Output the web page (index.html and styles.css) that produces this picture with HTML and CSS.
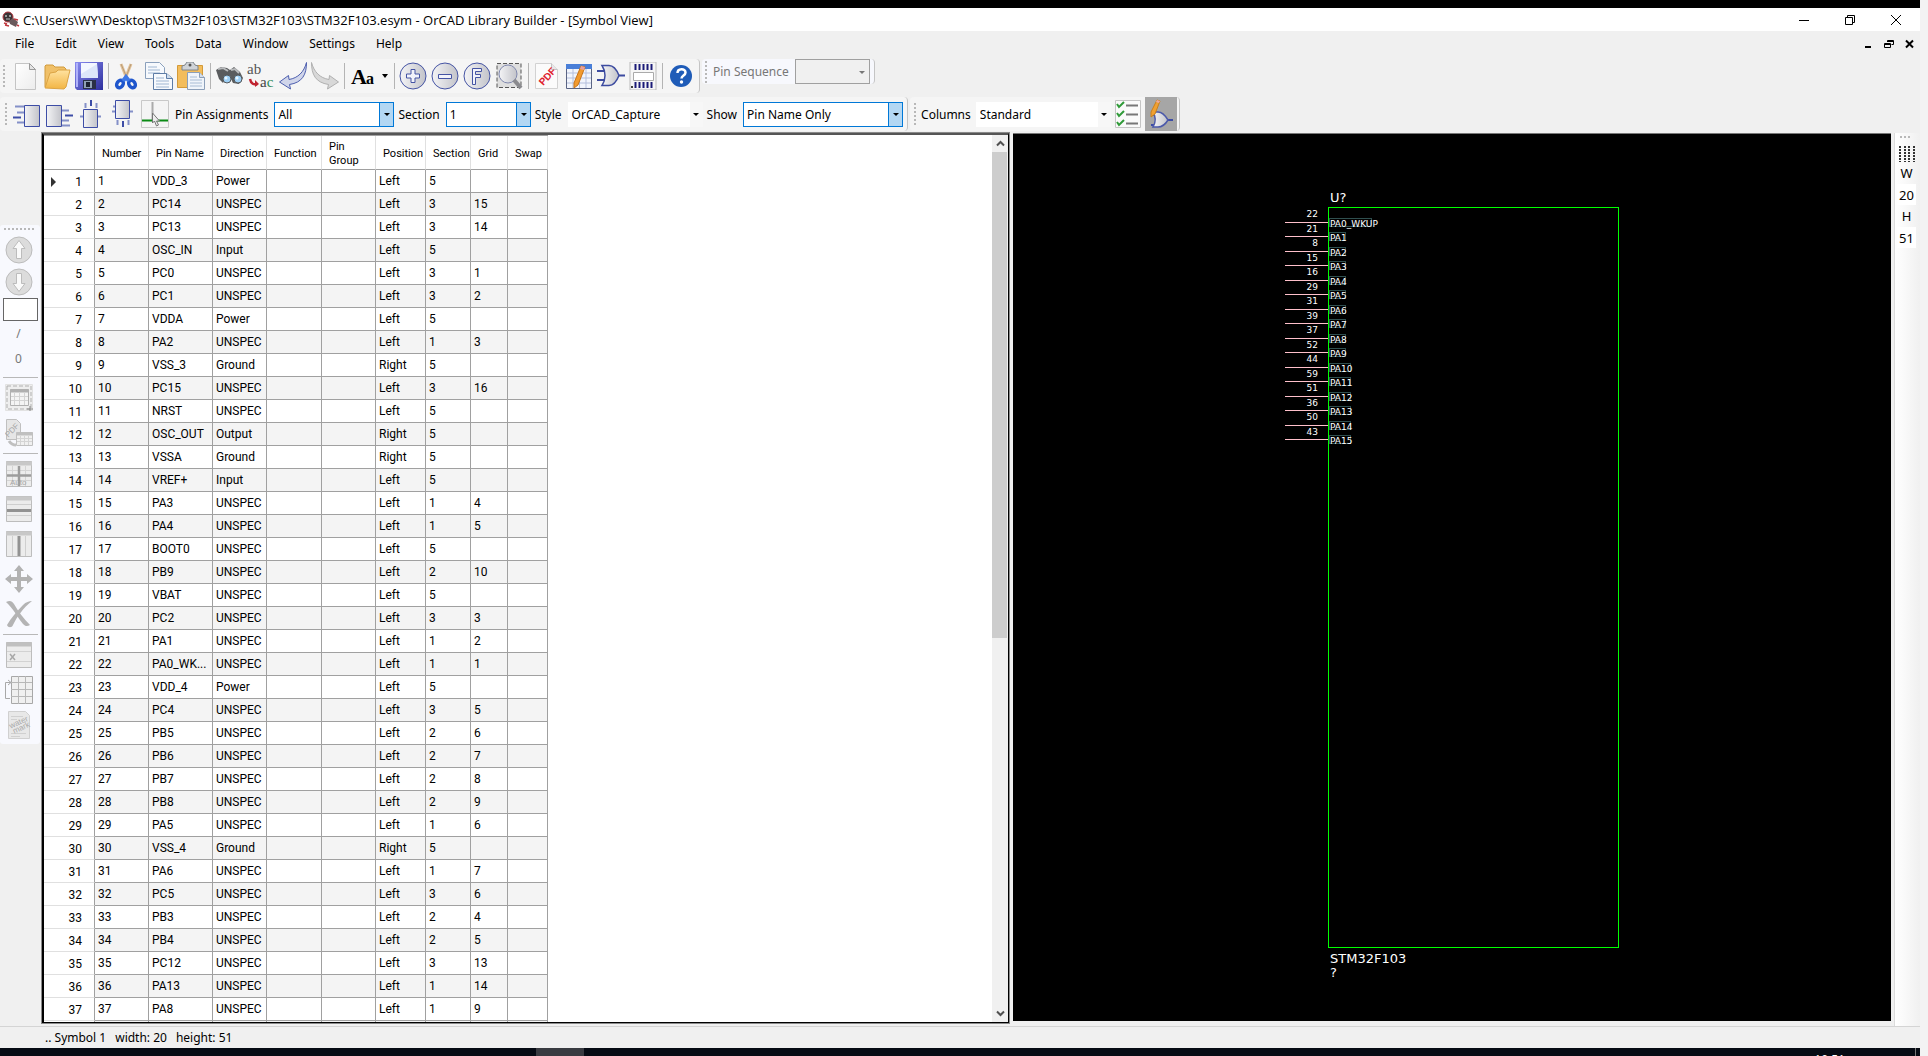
FILE: index.html
```html
<!DOCTYPE html>
<html lang="en">
<head>
    <meta charset="UTF-8">
    <meta name="viewport" content="width=device-width, initial-scale=1.0">
    <title>OrCAD Library Builder</title>
    <link rel="stylesheet" href="styles.css">
</head>
<body>
    <svg width="0" height="0" class="defs">
        <defs>
            <linearGradient id="gBtn" x1="0" x2="1"><stop offset="0" stop-color="#f4f4f6"/><stop offset="1" stop-color="#c2c3c9"/></linearGradient>
            <linearGradient id="gPage" x1="0" y1="0" x2="1" y2="1"><stop offset="0" stop-color="#ffffff"/><stop offset="1" stop-color="#ececec"/></linearGradient>
            <linearGradient id="gFolder" x1="0" y1="0" x2="0" y2="1"><stop offset="0" stop-color="#ffe2a0"/><stop offset="1" stop-color="#f2b544"/></linearGradient>
            <linearGradient id="gSave" x1="0" y1="0" x2="1" y2="1"><stop offset="0" stop-color="#8a8cf0"/><stop offset="1" stop-color="#2c2e9c"/></linearGradient>
        </defs>
    </svg>

    <div class="window">
        <header class="titlebar">
            <svg class="app-icon" width="18" height="18" viewBox="0 0 18 18"><circle cx="6" cy="6" r="5" fill="#3a3436" stroke="#b0343c"/><circle cx="4" cy="5" r="1" fill="#bbb"/><circle cx="8" cy="5" r="1" fill="#bbb"/><path d="M4 8h4" stroke="#bbb"/><path d="M7 10l4-3 5 4-2 5-6-3z" fill="#6a5a5c"/><path d="M2 12l3 1M3 14l4 1M12 8l4 1M15 14l2 1" stroke="#c23a40" stroke-width="1.5"/></svg>
            <span class="title">C:\Users\WY\Desktop\STM32F103\STM32F103\STM32F103.esym - OrCAD Library Builder - [Symbol View]</span>
            <div class="window-buttons">
                <button aria-label="Minimize"><svg width="12" height="12"><path d="M1 6.500h10" stroke="#000"/></svg></button>
                <button aria-label="Restore"><svg width="12" height="12" fill="none" stroke="#000"><path d="M1.500 3.500h7v7h-7zM3.500 3v-1.500h7v7h-2"/></svg></button>
                <button aria-label="Close"><svg width="12" height="12"><path d="M1 1l10 10M11 1l-10 10" stroke="#000"/></svg></button>
            </div>
        </header>

        <nav class="menubar">
            <button>File</button>
            <button>Edit</button>
            <button>View</button>
            <button>Tools</button>
            <button>Data</button>
            <button>Window</button>
            <button>Settings</button>
            <button>Help</button>
            <div class="child-buttons">
                <button aria-label="Minimize view"><svg width="10" height="10"><path d="M2 8h6" stroke="#000" stroke-width="2"/></svg></button>
                <button aria-label="Restore view"><svg width="10" height="10" fill="none" stroke="#000"><path d="M.500 4.500h6v4h-6zM.500 5.500h6M3.500 3v-1.500h6v4h-2M3 2.500h6"/></svg></button>
                <button aria-label="Close view"><svg width="10" height="10"><path d="M1 1.500l7 7M8 1.500l-7 7" stroke="#000" stroke-width="2"/></svg></button>
            </div>
        </nav>

        <div class="toolbar-row">
            <div class="toolbar">
                <span class="grip"></span>
                <button class="tool" aria-label="New"><svg width="28" height="28"><path d="M4.500 1.500h14l6 6v20h-20z" fill="url(#gPage)" stroke="#c4c4c4"/><path d="M18.500 1.500v6h6z" fill="#e4e4e4" stroke="#9a9a9a"/></svg></button>
                <button class="tool" aria-label="Open"><svg width="28" height="28"><path d="M2 25V4l1-1h7l2 2h9l2 2v5" fill="#f0c068" stroke="#d09a3c"/><path d="M2 26l5-15 6-1 2-2h12l-4 17-2 2z" fill="url(#gFolder)" stroke="#dca444"/></svg></button>
                <button class="tool" aria-label="Save"><svg width="28" height="28"><path d="M0 0h28v28H2l-2-2z" fill="url(#gSave)"/><path d="M6 1h16l1 15H6z" fill="#f4f7ff"/><path d="M6 12l16-10 1 14H6z" fill="#dde6fa"/><path d="M8 18h13v9H8z" fill="#2a3046"/><path d="M9 19h8v7H9z" fill="#8fa0b4"/><path d="M11 20h4v5h-4z" fill="#1c2230"/><path d="M1 1h2v24H1z" fill="#b0b2fa"/></svg></button>
                <span class="sep"></span>
                <button class="tool" aria-label="Cut"><svg width="28" height="28" fill="none"><path d="M8 2l6 15M18 2l-6 15" stroke="#e2c298" stroke-width="3"/><path d="M8 2l6 14M18 2l-5 13" stroke="#b89c78"/><ellipse cx="7" cy="22" rx="3" ry="4" stroke="#1f56cc" stroke-width="3.500" transform="rotate(35 7 22)"/><ellipse cx="19" cy="22" rx="3" ry="4" stroke="#1f56cc" stroke-width="3.500" transform="rotate(-35 19 22)"/><path d="M10 19l3-4 3 4" stroke="#3e78e6" stroke-width="4"/></svg></button>
                <button class="tool" aria-label="Copy"><svg width="28" height="28"><path d="M.500.500h14l5 5v11h-19z" fill="#f6f9fd" stroke="#8aa0bc"/><path d="M3 5h9M3 8h12M3 11h12" stroke="#9fb6d2"/><path d="M8.500 11.500h13l6 5v11h-19z" fill="#f6f9fd" stroke="#5d7ca6"/><path d="M21.500 11.500v5h6" fill="#cfdcec" stroke="#5d7ca6"/><path d="M11 16h8M11 19h13M11 22h13M11 25h13" stroke="#9fb6d2"/></svg></button>
                <button class="tool" aria-label="Paste"><svg width="28" height="28"><path d="M.500 3.500h25v22h-25z" fill="#f3bd5c" stroke="#d49a38"/><path d="M5 4l3-1 2-3h6l2 3 3 1v4H5z" fill="#cfd3d8" stroke="#7e858c"/><circle cx="13" cy="3" r="1.500" fill="#555"/><path d="M10.500 10.500h12l5 5v12h-17z" fill="#eff4fa" stroke="#8b9fb9"/><path d="M22.500 10.500v5h5" fill="#d4dfec" stroke="#8b9fb9"/><path d="M13 15h7M13 18h12M13 21h12M13 24h12" stroke="#a8bcd4"/></svg></button>
                <span class="sep"></span>
                <button class="tool" aria-label="Find"><svg width="28" height="28"><path d="M1 8l5-3 6 1 3 2 4-3 6 5 3 6-4 6-6-1-3-6-3-1-4 7-4-4z" fill="#5a5c5e"/><path d="M3 7l5-1 5 3M16 8l4-1 4 4" stroke="#b8babc" stroke-width="2" fill="none"/><circle cx="12" cy="17" r="4" fill="#9ed0f6" stroke="#55585a"/><circle cx="23" cy="17" r="4" fill="#9ed0f6" stroke="#55585a"/><circle cx="11" cy="16" r="1.500" fill="#e8f6ff"/><circle cx="22" cy="16" r="1.500" fill="#e8f6ff"/></svg></button>
                <button class="tool" aria-label="Replace"><svg width="28" height="28" class="serif-icon"><text x="0" y="12" fill="#555">ab</text><text x="13" y="25"><tspan fill="#444">a</tspan><tspan fill="#2c8a5a">c</tspan></text><path d="M3 17c1 5 4 6 7 5" stroke="#c02430" stroke-width="2.500" fill="none"/><path d="M8 18l4 4-4 3z" fill="#c02430"/></svg></button>
                <button class="tool" aria-label="Undo"><svg width="28" height="28"><path d="M27.500.500c0 12-4 20-17 22l1 4.500L.500 20l9-6.500.500 4C19 16 25 10 27.500.500z" fill="#d0d5ea" stroke="#4c5eae"/></svg></button>
                <button class="tool" aria-label="Redo"><svg width="28" height="28"><path d="M.500.500c0 12 4 20 17 22l-1 4.500L27.500 20l-9-6.500-.500 4C9 16 3 10 .500.500z" fill="#d8d8d8" stroke="#b0b0b0"/></svg></button>
                <span class="sep"></span>
                <button class="tool font-tool" aria-label="Font"><svg width="40" height="28" class="font-icon"><text x="2" y="22" font-size="22">A</text><text x="17" y="22" font-size="16">a</text><path d="M33 12h6l-3 4z"/></svg></button>
                <span class="sep"></span>
                <button class="tool" aria-label="Zoom in"><svg width="28" height="28" stroke="#4554a4"><circle cx="14" cy="14" r="13" fill="url(#gBtn)"/><path d="M12 7.500h4v4.500h4.500v4H16v4.500h-4V16H7.500v-4H12z" fill="#f2f3fa"/></svg></button>
                <button class="tool" aria-label="Zoom out"><svg width="28" height="28" stroke="#4554a4"><circle cx="14" cy="14" r="13" fill="url(#gBtn)"/><path d="M7.500 12.500h13v4h-13z" fill="#f2f3fa"/></svg></button>
                <button class="tool" aria-label="Fit"><svg width="28" height="28" stroke="#4554a4"><circle cx="14" cy="14" r="13" fill="url(#gBtn)"/><path d="M9.500 6.500h9v3h-6v3h5v3h-5v7h-3z" fill="#f2f3fa"/></svg></button>
                <button class="tool" aria-label="Zoom to selection"><svg width="28" height="28"><path d="M2 1.500h24v24H2z" fill="#dedede" stroke="#555" stroke-dasharray="4 2"/><circle cx="13" cy="12" r="9" fill="url(#gBtn)" stroke="#8088ae"/><path d="M19 18l7 8" stroke="#8a8a8e" stroke-width="4"/></svg></button>
                <span class="sep"></span>
                <button class="tool" aria-label="PDF"><svg width="28" height="28"><path d="M2.500 1.500h16l6 6v19h-22z" fill="#fbfbfb" stroke="#d2d2d2"/><path d="M18.500 1.500v6h6" fill="#e8e8e8" stroke="#c4c4c4"/><text x="-10" y="4" transform="translate(14 14) rotate(-48)" class="pdf-text">PDF</text></svg></button>
                <button class="tool" aria-label="Edit table"><svg width="28" height="28"><path d="M1.500 2.500h25v24h-25z" fill="#f2f5fc" stroke="#5a6484"/><path d="M1 2h26v5H1z" fill="#4a7fd8"/><path d="M8 7v19M14.500 7v19M21 7v19M2 11h24M2 16h24M2 21h24" stroke="#b4bfdc"/><path d="M16 4l4 1-7 18-4 3 0-5z" fill="#f29a2e" stroke="#c87418"/><path d="M16 4l4 1-1 3-4-1z" fill="#e8a0a0"/></svg></button>
                <button class="tool" aria-label="Symbol"><svg width="28" height="28" fill="none" stroke="#3c4ba0" stroke-width="1.500"><path d="M0 9h8M0 18h8M22 13.500h6" stroke-width="2"/><path d="M5 3.500h7c5 0 8 5 10 10-2 5-5 10-10 10H5c4-6 4-14 0-20z" fill="url(#gBtn)"/></svg></button>
                <button class="tool" aria-label="Footprint"><svg width="28" height="28"><path d="M1 0h26v28H1z" fill="#f6f6f6" stroke="#bbb"/><path d="M6.500 2v6M10.500 2v6M14.500 2v6M18.500 2v6M22.500 2v6M6.500 20v6M10.500 20v6M14.500 20v6M18.500 20v6M22.500 20v6" stroke="#1c1c78" stroke-width="2"/><path d="M4.500 10.500h20v8h-20z" fill="#fff" stroke="#aaa"/><circle cx="3" cy="25" r="1"/></svg></button>
                <span class="sep"></span>
                <button class="tool" aria-label="Help"><svg width="28" height="28"><circle cx="14" cy="14" r="11" fill="#1f5cb8"/><path d="M10.500 11c0-5 8-5 8-.500 0 3-4 3-4 6" fill="none" stroke="#fff" stroke-width="2.500"/><circle cx="14.500" cy="20" r="1.700" fill="#fff"/></svg></button>
            </div>
            <div class="toolbar sequence disabled">
                <span class="grip"></span>
                <label for="sequence">Pin Sequence</label>
                <span class="combo w-sequence off"><select id="sequence" disabled><option></option></select></span>
            </div>
        </div>

        <div class="toolbar-row">
            <div class="toolbar pins">
                <span class="grip"></span>
                <button class="tool" aria-label="Pins left"><svg width="28" height="28" stroke="#3d4da6"><path d="M11.500 5.500h15v21h-15z" fill="url(#gBtn)"/><path d="M2 6.500h9M4 12.500h7M4 22.500h7" stroke="#8490c8" stroke-width="2"/><path d="M0 17.500h8" stroke-width="2"/></svg></button>
                <button class="tool" aria-label="Pins right"><svg width="28" height="28" stroke="#3d4da6"><path d="M1.500 5.500h15v21h-15z" fill="url(#gBtn)"/><path d="M17 10.500h7M17 20.500h7M17 25.500h8" stroke="#8490c8" stroke-width="2"/><path d="M20 15.500h8" stroke-width="2"/></svg></button>
                <button class="tool" aria-label="Pins top"><svg width="28" height="28" stroke="#3d4da6"><path d="M6.500 9.500h14v18h-14z" fill="url(#gBtn)"/><path d="M8.500 3v5M19.500 3v5M3 16.500h3M21 16.500h3" stroke="#8490c8" stroke-width="2"/><path d="M14 0v6" stroke-width="2"/></svg></button>
                <button class="tool" aria-label="Pins bottom"><svg width="28" height="28" stroke="#3d4da6"><path d="M6.500.500h14v18h-14z" fill="url(#gBtn)"/><path d="M8.500 20v5M19.500 20v5M3 11.500h3M21 11.500h3M4 6.500h2" stroke="#8490c8" stroke-width="2"/><path d="M14 21v6" stroke-width="2"/></svg></button>
                <button class="tool" aria-label="Snap"><svg width="28" height="28"><path d="M.500.500h27v27H.500z" fill="#f4f4f4" stroke="#c8c8c8"/><path d="M11.500 2v18" stroke="#aaa" stroke-width="2"/><path d="M1 20.500h26" stroke="#0a8a14" stroke-width="2"/><path d="M11.500 13v10l2-2 2 5 2-1-2-4h3z" fill="#eee" stroke="#777"/></svg></button>
                <label for="assign">Pin Assignments</label>
                <span class="combo w-assign boxed"><select id="assign"><option>All</option></select></span>
                <label for="section">Section</label>
                <span class="combo w-section boxed"><select id="section"><option>1</option></select></span>
                <label for="style">Style</label>
                <span class="combo w-style"><select id="style"><option>OrCAD_Capture</option></select></span>
                <label for="show">Show</label>
                <span class="combo w-show boxed"><select id="show"><option>Pin Name Only</option></select></span>
            </div>
            <div class="toolbar columns">
                <span class="grip"></span>
                <label for="columns">Columns</label>
                <span class="combo w-style"><select id="columns"><option>Standard</option></select></span>
                <button class="tool" aria-label="Choose columns"><svg width="28" height="28"><path d="M1.500.500h25v27h-25z" fill="#fafafa" stroke="#c4c4c4"/><path d="M3 4l2 3 5-5M3 13l2 3 5-5M3 22l2 3 5-5" fill="none" stroke="#2f9a38" stroke-width="2"/><path d="M12 5.500h12M12 14.500h12M12 23.500h12" stroke="#777" stroke-width="2"/></svg></button>
                <button class="tool pressed" aria-label="Edit symbol"><svg width="32" height="34"><path d="M6 18h5M6 28h5M22 23h6" stroke="#3d4da6" stroke-width="2"/><path d="M8 15h5c4 0 7 3 10 8-3 5-6 7-10 7H8c3-5 3-10 0-15z" fill="url(#gBtn)" stroke="#4b59aa" stroke-width="1.500"/><path d="M12 3l3 1-5 13-4 3 0-5z" fill="#f0a030" stroke="#c8801c"/><path d="M12 3l3 1-1 2-3-1z" fill="#e8a8a0"/></svg></button>
            </div>
        </div>

        <main class="workspace">
            <aside class="left-dock">
                <div class="side-toolbar">
                    <span class="grip-h"></span>
                    <div class="side-nav">
                        <button class="tool" aria-label="Previous"><svg width="28" height="28" stroke="#bcbcbc"><circle cx="14" cy="14" r="13" fill="#dcdcdc"/><path d="M14 4.500l6 8h-3.500v10h-5v-10H8z" fill="#fafafa"/></svg></button>
                        <button class="tool" aria-label="Next"><svg width="28" height="28" stroke="#bcbcbc"><circle cx="14" cy="14" r="13" fill="#dcdcdc"/><path d="M14 23.500l6-8h-3.500v-10h-5v10H8z" fill="#fafafa"/></svg></button>
                    </div>
                    <input class="page-input" type="text" aria-label="Page">
                    <span class="page-text">/</span>
                    <span class="page-text">0</span>
                    <span class="sep-h"></span>
                    <div class="side-group">
                        <button class="tool" aria-label="Select table"><svg width="28" height="28" fill="none" stroke="#b0b0b0"><path d="M.500.500h27v26H.500z" stroke="#e2e2e2" fill="#eee"/><path d="M2 2h24v23H2z" stroke-dasharray="4 2"/><path d="M5.500 5.500h18v16h-18z" fill="#f4f4f4"/><path d="M5 7h19" stroke-width="3"/><path d="M9.500 8v13M14.500 8v13M19.500 8v13M6 12.500h17M6 16.500h17" stroke="#d4d4d4"/><path d="M22 25h6M25 22v5" stroke="#888"/></svg></button>
                        <button class="tool" aria-label="PDF to table"><svg width="28" height="28" fill="none" stroke="#c0c0c0"><path d="M1.500.500h10l4 4v16H1.500z" fill="#e6e6e6"/><text x="0" y="15" transform="rotate(-45 6 13)" class="tiny-text">PDF</text><path d="M4 22c2 3 4 4 7 4" stroke-width="3"/><path d="M11.500 13.500h16v13h-16z" fill="#f0f0f0"/><path d="M11 15h17" stroke-width="3"/><path d="M15.500 17v9M19.500 17v9M23.500 17v9M12 19.500h15M12 22.500h15" stroke="#d4d4d4"/></svg></button>
                    </div>
                    <span class="sep-h"></span>
                    <div class="side-group">
                        <button class="tool" aria-label="Auto grid"><svg width="28" height="28" fill="none" stroke="#bdbdbd"><path d="M1.500 1.500h25v25h-25z" fill="#ececec"/><path d="M1 3.500h26" stroke="#c8c8c8" stroke-width="4"/><path d="M2 10.500h24M2 20.500h24M7.500 6v20M20.500 6v20" stroke="#d4d4d4"/><path d="M2 15.500h24M14 6v20" stroke="#9c9c9c" stroke-width="2.500"/><text x="5" y="25" class="tiny-text">Auto</text></svg></button>
                        <button class="tool" aria-label="Row line"><svg width="28" height="28" fill="none" stroke="#bdbdbd"><path d="M1.500 1.500h25v25h-25z" fill="#ececec"/><path d="M1 3.500h26" stroke="#c8c8c8" stroke-width="4"/><path d="M2 9.500h24M2 20.500h24" stroke="#cfcfcf"/><path d="M2 15.500h24" stroke="#929292" stroke-width="3"/></svg></button>
                        <button class="tool" aria-label="Column line"><svg width="28" height="28" fill="none" stroke="#bdbdbd"><path d="M1.500 1.500h25v25h-25z" fill="#ececec"/><path d="M1 3.500h26" stroke="#c8c8c8" stroke-width="4"/><path d="M7.500 6v20M20.500 6v20" stroke="#cfcfcf"/><path d="M14 6v20" stroke="#929292" stroke-width="3"/></svg></button>
                        <button class="tool" aria-label="Move"><svg width="28" height="28"><path d="M14 0l5 6h-3v6h6V9l6 5-6 5v-3h-6v6h3l-5 6-5-6h3v-6H6v3l-6-5 6-5v3h6V6H9z" fill="#b2b2b2"/></svg></button>
                        <button class="tool" aria-label="Delete"><svg width="28" height="28" fill="#b4b4b4"><path d="M1 2c4-2 6-1 8 2 4 7 9 14 16 21-3 2-5 1-7-1C13 18 8 8 1 2z"/><path d="M27 1c-3 0-6 1-9 4C12 11 6 18 2 25c1 3 5 3 6 0C12 17 18 8 27 1z"/></svg></button>
                    </div>
                    <span class="sep-h"></span>
                    <div class="side-group">
                        <button class="tool" aria-label="Remove row"><svg width="28" height="28" fill="none" stroke="#bdbdbd"><path d="M1.500 1.500h25v25h-25z" fill="#ececec"/><path d="M1 3.500h26" stroke="#c0c0c0" stroke-width="4"/><path d="M2 10.500h24M2 20.500h24" stroke="#d2d2d2"/><path d="M5 13l5 6M10 13l-5 6" stroke="#a8a8a8" stroke-width="1.500"/></svg></button>
                        <button class="tool" aria-label="Swap columns"><svg width="28" height="28" fill="none" stroke="#a8a8a8"><path d="M6.500.500h21v27h-21z" fill="#f0f0f0"/><path d="M6 6.500h21M6 13.500h21M6 20.500h21M13.500 0v28M20.500 0v28" stroke="#b8b8b8"/><path d="M6 6.500H.500v16H5M3 4l3 2.500L3 9"/></svg></button>
                        <button class="tool" aria-label="Watermark"><svg width="28" height="28" fill="none" stroke="#d0d0d0"><path d="M3.500.500h17l4 4v23h-21z" fill="#e8e8e8"/><path d="M6 5.500h12M6 8.500h6M6 22.500h15M6 25.500h9"/><text x="5" y="14" transform="rotate(-25 14 14)" class="tiny-text">water</text><text x="6" y="20" transform="rotate(-25 14 14)" class="tiny-text">mark</text></svg></button>
                    </div>
                </div>
            </aside>

            <section class="pin-pane">
                <div class="grid-view">
                    <table>
                        <thead>
                            <tr>
                                <th class="c-row"></th>
                                <th class="c-number">Number</th>
                                <th class="c-name">Pin Name</th>
                                <th class="c-direction">Direction</th>
                                <th class="c-function">Function</th>
                                <th class="c-group">Pin Group</th>
                                <th class="c-position">Position</th>
                                <th class="c-section">Section</th>
                                <th class="c-grid">Grid</th>
                                <th class="c-swap">Swap</th>
                            </tr>
                        </thead>
                        <tbody id="pinRows"></tbody>
                    </table>
                </div>
                <div class="scrollbar">
                    <button aria-label="Scroll up"><svg width="9" height="9"><path d="M1 6.500l3.500-3.500 3.500 3.500" fill="none" stroke="#505050" stroke-width="2"/></svg></button>
                    <div class="track"><div class="thumb"></div></div>
                    <button aria-label="Scroll down"><svg width="9" height="9"><path d="M1 2.500l3.500 3.500 3.500-3.500" fill="none" stroke="#505050" stroke-width="2"/></svg></button>
                </div>
            </section>

            <section class="symbol-pane">
                <svg id="symbol" width="100%" height="100%">
                    <text class="label" x="317" y="68">U?</text>
                    <g id="pins"></g>
                    <path class="outline" d="M315.500 73.500h290v740h-290z"/>
                    <text class="label" x="317" y="829">STM32F103</text>
                    <text class="label" x="317" y="843">?</text>
                </svg>
            </section>

            <aside class="right-dock">
                <span class="grip-h short"></span>
                <button class="grid-tool" aria-label="Grid"><svg width="16" height="16" stroke="#333" stroke-width="2" stroke-dasharray="2 1"><path d="M1 0v16M6 0v16M10 0v16M15 0v16"/></svg></button>
                <label for="symW">W</label>
                <input id="symW" type="text" value="20">
                <label for="symH">H</label>
                <input id="symH" type="text" value="51">
            </aside>
        </main>

        <footer class="statusbar">
            <span>.. Symbol 1</span>
            <span>width: 20</span>
            <span>height: 51</span>
        </footer>

        <div class="taskbar">
            <span class="task"></span>
            <span class="clock">10:51</span>
            <span class="desktop-edge"></span>
        </div>
    </div>

    <script>
        // number is the row index + 1: [name, direction, position, section, grid]
        const rows = [
            ['VDD_3', 'Power', 'Left', 5, ''],
            ['PC14', 'UNSPEC', 'Left', 3, 15],
            ['PC13', 'UNSPEC', 'Left', 3, 14],
            ['OSC_IN', 'Input', 'Left', 5, ''],
            ['PC0', 'UNSPEC', 'Left', 3, 1],
            ['PC1', 'UNSPEC', 'Left', 3, 2],
            ['VDDA', 'Power', 'Left', 5, ''],
            ['PA2', 'UNSPEC', 'Left', 1, 3],
            ['VSS_3', 'Ground', 'Right', 5, ''],
            ['PC15', 'UNSPEC', 'Left', 3, 16],
            ['NRST', 'UNSPEC', 'Left', 5, ''],
            ['OSC_OUT', 'Output', 'Right', 5, ''],
            ['VSSA', 'Ground', 'Right', 5, ''],
            ['VREF+', 'Input', 'Left', 5, ''],
            ['PA3', 'UNSPEC', 'Left', 1, 4],
            ['PA4', 'UNSPEC', 'Left', 1, 5],
            ['BOOT0', 'UNSPEC', 'Left', 5, ''],
            ['PB9', 'UNSPEC', 'Left', 2, 10],
            ['VBAT', 'UNSPEC', 'Left', 5, ''],
            ['PC2', 'UNSPEC', 'Left', 3, 3],
            ['PA1', 'UNSPEC', 'Left', 1, 2],
            ['PA0_WK...', 'UNSPEC', 'Left', 1, 1],
            ['VDD_4', 'Power', 'Left', 5, ''],
            ['PC4', 'UNSPEC', 'Left', 3, 5],
            ['PB5', 'UNSPEC', 'Left', 2, 6],
            ['PB6', 'UNSPEC', 'Left', 2, 7],
            ['PB7', 'UNSPEC', 'Left', 2, 8],
            ['PB8', 'UNSPEC', 'Left', 2, 9],
            ['PA5', 'UNSPEC', 'Left', 1, 6],
            ['VSS_4', 'Ground', 'Right', 5, ''],
            ['PA6', 'UNSPEC', 'Left', 1, 7],
            ['PC5', 'UNSPEC', 'Left', 3, 6],
            ['PB3', 'UNSPEC', 'Left', 2, 4],
            ['PB4', 'UNSPEC', 'Left', 2, 5],
            ['PC12', 'UNSPEC', 'Left', 3, 13],
            ['PA13', 'UNSPEC', 'Left', 1, 14],
            ['PA8', 'UNSPEC', 'Left', 1, 9]
        ];

        const body = document.getElementById('pinRows');
        rows.forEach(([name, dir, pos, section, grid], i) => {
            const tr = document.createElement('tr');
            const arrow = i === 0 ? '<span class="current"></span>' : '';
            tr.innerHTML = `<th>${arrow}${i + 1}</th>` +
                [i + 1, name, dir, '', '', pos, section, grid, ''].map(v => `<td>${v}</td>`).join('');
            body.appendChild(tr);
        });
        // the next row only peeks in at the bottom edge
        const last = document.createElement('tr');
        last.innerHTML = '<th></th>' + '<td></td>'.repeat(9);
        body.appendChild(last);

        const pins = [
            [22, 'PA0_WKUP'], [21, 'PA1'], [8, 'PA2'], [15, 'PA3'],
            [16, 'PA4'], [29, 'PA5'], [31, 'PA6'], [39, 'PA7'],
            [37, 'PA8'], [52, 'PA9'], [44, 'PA10'], [59, 'PA11'],
            [51, 'PA12'], [36, 'PA13'], [50, 'PA14'], [43, 'PA15']
        ];

        document.getElementById('pins').innerHTML = pins.map(([num, name], i) => {
            const y = 88 + Math.floor(i * 14.5);
            const box = name.length > 4 ? 42 : name.length * 5 + 1;
            return `<path class="pin" d="M272 ${y + 0.5}h43"/>` +
                `<path class="name-box" d="M316.500 ${y - 3.5}h${box}v8h-${box}z"/>` +
                `<text class="pin-text num" x="305" y="${y - 5 + i % 2}">${num}</text>` +
                `<text class="pin-text" x="317" y="${y + 5}">${name}</text>`;
        }).join('');
    </script>
</body>
</html>
```
FILE: styles.css
```css
* {
    box-sizing: border-box;
}

body {
    margin: 0;
    height: 100vh;
    padding-right: 8px;
    background-color: #f3f3f3;
    font-family: "Noto Sans", sans-serif;
    font-size: 12px;
    color: #000;
    overflow: hidden;
}

button, select, input {
    font: inherit;
    color: inherit;
    border: none;
    background: none;
    padding: 0;
    margin: 0;
}

svg {
    display: block;
}

.defs {
    position: absolute;
}

.window {
    height: 100%;
    display: flex;
    flex-direction: column;
    background-color: #f0f0f0;
    border-top: 8px solid #000;
}

/* title and menu */
.titlebar {
    display: flex;
    align-items: center;
    height: 23px;
    background-color: #fff;
    padding: 0 18px 0 2px;
    gap: 3px;
}

.title {
    flex: 1;
    white-space: nowrap;
    font-family: "Open Sans", sans-serif;
    font-size: 13px;
}

.window-buttons {
    display: flex;
    gap: 34px;
}

.menubar {
    display: flex;
    align-items: center;
    height: 28px;
    padding: 0 5px 3px 15px;
    gap: 21px;
}

.child-buttons {
    display: flex;
    gap: 11px;
    margin-left: auto;
}

/* toolbars */
.toolbar-row {
    display: flex;
    align-items: flex-start;
    gap: 2px;
    margin-bottom: 4px;
}

.toolbar {
    display: flex;
    align-items: center;
    gap: 4px;
    height: 34px;
    padding: 3px 4px 3px 3px;
    background-color: #f5f5f5;
    border-right: 1px solid #c4c4c4;
    border-radius: 4px;
}

.toolbar label {
    padding-right: 2px;
    white-space: nowrap;
}

.tool + label {
    padding-left: 2px;
}

.sequence {
    height: 25px;
    padding: 0 4px 0 3px;
    background-color: #f7f8fd;
    color: #777;
}

.pins {
    padding: 3px 4px 3px 5px;
}

.columns {
    padding: 0 2px 0 4px;
    gap: 3px;
}

.grip {
    width: 3px;
    height: 22px;
    margin-right: 1px;
    background-image: linear-gradient(#b8b8b8 50%, transparent 50%);
    background-size: 2px 4px;
    background-repeat: repeat-y;
}

.sep {
    width: 2px;
    height: 26px;
    border-right: 1px solid #b4b4b4;
}

.tool {
    width: 28px;
    height: 28px;
}

.font-tool {
    width: 40px;
}

.pressed {
    width: 32px;
    height: 34px;
    background-color: #a6a6a6;
}

.serif-icon {
    font-family: "Liberation Serif", serif;
    font-size: 15px;
}

.font-icon {
    font-family: "Liberation Serif", serif;
    font-weight: bold;
}

.pdf-text {
    font: bold 10px "Liberation Sans", sans-serif;
    fill: #e0202c;
}

.tiny-text {
    font: 8px "Liberation Sans", sans-serif;
    fill: #a8a8a8;
    stroke: none;
}

.combo {
    position: relative;
    display: flex;
    height: 25px;
    background-color: #fff;
}

.combo select {
    appearance: none;
    width: 100%;
    padding: 0 14px 0 4px;
}

.combo::after {
    content: "";
    position: absolute;
    top: 0;
    right: 0;
    width: 13px;
    height: 100%;
    background-color: #f7f7f7;
    pointer-events: none;
}

.combo::before {
    content: "";
    position: absolute;
    z-index: 1;
    top: 11px;
    right: 4px;
    border: 3px solid transparent;
    border-top: 3px solid #000;
    border-bottom: none;
    pointer-events: none;
}

.combo.boxed {
    border: 1px solid #0078d7;
}

.combo.boxed select {
    padding-left: 3px;
}

.combo.boxed::after {
    background-color: #b3d7f3;
    border-left: 1px solid #0078d7;
}

.combo.boxed::before {
    top: 10px;
    right: 3px;
}

.combo.off {
    border: 1px solid #a0a0a0;
    background-color: #f0f0f0;
}

.combo.off::after {
    background: none;
}

.combo.off::before {
    border-top-color: #777;
}

.w-sequence { width: 75px; }
.w-assign { width: 120px; }
.w-section { width: 85px; }
.w-style { width: 135px; }
.w-show { width: 160px; }

/* workspace */
.workspace {
    flex: 1;
    display: flex;
    min-height: 0;
    margin-top: -2px;
}

.left-dock {
    width: 41px;
    padding-top: 92px;
}

.side-toolbar {
    display: flex;
    flex-direction: column;
    width: 40px;
    padding: 3px 2px 5px 3px;
    background-color: #f8f9fe;
    border-radius: 3px;
}

.grip-h {
    height: 2px;
    margin: 0 3px 6px 1px;
    background-image: linear-gradient(90deg, #b8b8b8 50%, transparent 50%);
    background-size: 4px 2px;
}

.side-nav, .side-group {
    display: flex;
    flex-direction: column;
    gap: 4px;
    padding-left: 2px;
}

.side-group {
    gap: 7px;
}

.page-input {
    height: 23px;
    margin-top: 2px;
    border: 1px solid #666;
    background-color: #fff;
    width: 35px;
}

.page-text {
    height: 25px;
    line-height: 25px;
    width: 31px;
    text-align: center;
    color: #777;
}

.sep-h {
    height: 1px;
    margin: 6px 0;
    background-color: #b8b8b8;
}

.pin-pane {
    flex: 964;
    display: flex;
    min-width: 0;
    border: 1px solid #000;
    border-top: 2px solid #555;
    border-left: 2px solid #000;
    outline: 1px solid #8a8a8a;
    background-color: #fff;
    margin: 0 4px 3px 1px;
    overflow: hidden;
}

.grid-view {
    flex: 1;
    overflow: hidden;
}

table {
    border-collapse: separate;
    border-spacing: 0;
    table-layout: fixed;
    width: 504px;
    font: 12px "Roboto", sans-serif;
    border-top: 1px solid #a0a0a0;
}

th, td {
    height: 23px;
    padding: 0 0 0 3px;
    border-right: 1px solid #a0a0a0;
    border-bottom: 1px solid #a0a0a0;
    font-weight: normal;
    text-align: left;
    line-height: 14px;
    white-space: nowrap;
}

thead th {
    height: 34px;
    padding: 2px 0 0 7px;
    border-right-color: #e0e0e0;
    font-size: 11px;
    white-space: normal;
}

thead .c-row {
    border-right-color: #a0a0a0;
}

tbody th {
    position: relative;
    text-align: right;
    padding: 2px 12px 0 0;
    border-bottom-color: #e0e0e0;
}

tbody tr:nth-child(even) td {
    background-color: #f4f4f4;
}

.current {
    position: absolute;
    left: 7px;
    top: 7px;
    border: 5px solid transparent;
    border-left: 5px solid #333;
    border-right: none;
}

.c-row { width: 51px; }
.c-number { width: 54px; }
.c-name { width: 64px; }
.c-direction { width: 54px; }
.c-function { width: 55px; }
.c-group { width: 54px; }
.c-position { width: 50px; }
.c-section { width: 45px; }
.c-grid { width: 37px; }
.c-swap { width: 40px; }

.scrollbar {
    display: flex;
    flex-direction: column;
    width: 16px;
    background-color: #f0f0f0;
}

.scrollbar button {
    display: flex;
    align-items: center;
    justify-content: center;
    height: 17px;
}

.track {
    flex: 1;
}

.thumb {
    height: 57%;
    width: 15px;
    background-color: #cdcdcd;
}

.symbol-pane {
    flex: 878;
    min-width: 0;
    background-color: #000;
    border-top: 1px solid #777;
    margin: 0 3px 5px 0;
}

.label {
    font: 13px "DejaVu Sans", sans-serif;
    fill: #fff;
}

.outline {
    fill: none;
    stroke: #00ff00;
    shape-rendering: crispEdges;
}

.pin {
    stroke: #ffc0cb;
    shape-rendering: crispEdges;
}

.name-box {
    fill: none;
    stroke: #2f4f4f;
    shape-rendering: crispEdges;
}

.pin-text {
    font: 9px "DejaVu Sans", sans-serif;
    fill: #fff;
}

.num {
    text-anchor: end;
}

.right-dock {
    display: flex;
    flex-direction: column;
    width: 26px;
    padding: 3px 4px 0 2px;
    border-left: 1px solid #dcdcdc;
    background-image: linear-gradient(90deg, #fff, #f0f0f0);
}

.short {
    width: 12px;
    margin: 0 0 8px 3px;
}

.grid-tool {
    align-self: center;
    height: 16px;
}

.right-dock label {
    height: 22px;
    line-height: 22px;
    text-align: center;
    font-size: 13px;
}

.right-dock input {
    width: 100%;
    height: 21px;
    background-color: #fff;
    text-align: center;
    font-size: 13px;
}

/* status and taskbar */
.statusbar {
    display: flex;
    align-items: center;
    gap: 9px;
    height: 22px;
    padding-left: 45px;
    border-top: 1px solid #d4d4d4;
}

.taskbar {
    display: flex;
    align-items: flex-start;
    height: 8px;
    padding-right: 4px;
    background-color: #060b14;
    overflow: hidden;
}

.task {
    width: 48px;
    height: 8px;
    margin-left: 28%;
    background-color: #393b41;
}

.clock {
    margin-left: auto;
    padding-top: 3px;
    color: #fff;
}

.desktop-edge {
    width: 1px;
    height: 8px;
    margin-left: 70px;
    background-color: #777;
}
```
